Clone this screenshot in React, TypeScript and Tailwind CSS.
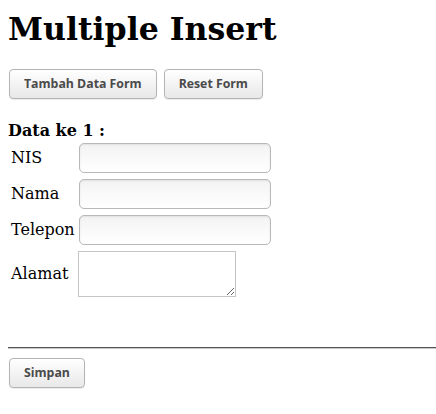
const btn =
  'h-[30px] rounded-[4px] border border-[#b4b4b4] bg-gradient-to-b from-white to-[#e8e8e8] px-[14px] text-[12.3px] font-bold text-[#4a4a4a] shadow-[0_1px_1px_rgba(0,0,0,0.08)] [font-family:"Open_Sans",sans-serif]';

const input =
  'h-[30px] w-[192px] rounded-[5px] border border-[#b8b8b8] bg-gradient-to-b from-[#f3f3f3] to-white px-2 shadow-[inset_0_1px_2px_rgba(0,0,0,0.08)] outline-none';

export default function App() {
  return (
    <div className='bg-white pt-[10px] text-black [font-family:"DejaVu_Serif",serif]'>
      <div className="px-2">
        <h1 className="mb-[22px] text-[31.6px] font-bold leading-[37px]">
          Multiple Insert
        </h1>

        <div className="flex gap-[7px] pl-px">
          <button className={btn}>Tambah Data Form</button>
          <button className={btn}>Reset Form</button>
        </div>

        <p className="mt-[22px] text-[16px] font-bold leading-[19px]">
          Data ke 1 :
        </p>

        {/* Form rows */}
        <div className="mt-[3px] flex flex-col gap-[6px] pl-[3px] text-[16px]">
          <div className="flex items-center">
            <span className="w-[68px]">NIS</span>
            <input className={input} />
          </div>
          <div className="flex items-center">
            <span className="w-[68px]">Nama</span>
            <input className={input} />
          </div>
          <div className="flex items-center">
            <span className="w-[68px]">Telepon</span>
            <input className={input} />
          </div>
          <div className="flex items-center">
            <span className="w-[67px]">Alamat</span>
            <textarea className="h-[46px] w-[158px] border border-[#c4c4c4] bg-white outline-none" />
          </div>
        </div>
      </div>

      <div className="ml-2 mt-[50px] border-t border-b border-t-[#555] border-b-[#c8c8c8]" />

      <div className="px-2 pb-[27px] pt-[9px]">
        <button className={btn + ' ml-px'}>Simpan</button>
      </div>
    </div>
  );
}
